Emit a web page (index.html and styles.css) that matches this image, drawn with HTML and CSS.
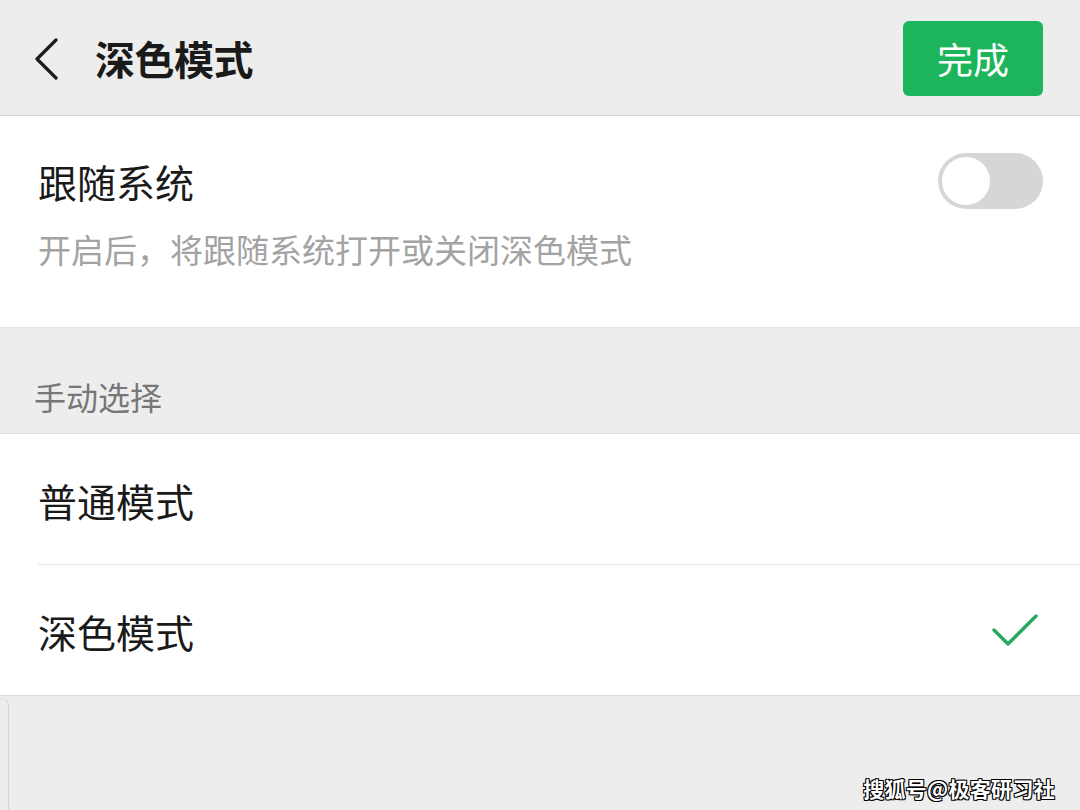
FILE: index.html
```html
<!DOCTYPE html>
<html lang="zh-CN">
<head>
<meta charset="utf-8">
<title>深色模式</title>
<link rel="stylesheet" href="styles.css">
</head>
<body>
<div class="page">
  <header class="topbar">
    <div class="topbar-left">
      <svg class="back" width="26" height="42" viewBox="0 0 26 42">
        <polyline points="23,2 4,21 23,40" fill="none" stroke="#1c1c1c" stroke-width="3.2" stroke-linecap="round" stroke-linejoin="round"/>
      </svg>
      <h1 class="title">深色模式</h1>
    </div>
    <button class="done">完成</button>
  </header>

  <section class="group follow">
    <div class="follow-row">
      <div class="follow-label">跟随系统</div>
      <div class="switch"><div class="knob"></div></div>
    </div>
    <div class="follow-desc">开启后，将跟随系统打开或关闭深色模式</div>
  </section>

  <div class="section-head">手动选择</div>

  <section class="group list">
    <div class="item">
      <span class="item-label">普通模式</span>
    </div>
    <div class="item">
      <span class="item-label">深色模式</span>
      <svg class="check" width="48" height="36" viewBox="0 0 48 36">
        <polyline points="3,17 17,31 45,3" fill="none" stroke="#25a862" stroke-width="3.4" stroke-linecap="round" stroke-linejoin="round"/>
      </svg>
    </div>
  </section>

  <div class="rest">
    <div class="edge"></div>
  </div>

  <div class="watermark">搜狐号@极客研习社</div>
</div>
</body>
</html>
```

FILE: styles.css
```css
html, body {
  margin: 0;
  padding: 0;
}
body {
  background: #ededed;
  font-family: "Noto Sans CJK SC", "Noto Sans", sans-serif;
  color: #1a1a1a;
}
.page {
  position: relative;
  width: 1080px;
  height: 810px;
  overflow: hidden;
  display: flex;
  flex-direction: column;
  background: #ededed;
}
.topbar {
  height: 115px;
  flex: none;
  display: flex;
  align-items: center;
  justify-content: space-between;
  padding: 0 37px 0 33px;
  border-bottom: 1px solid #d4d4d4;
  box-sizing: content-box;
}
.topbar-left {
  display: flex;
  align-items: center;
}
.back {
  display: block;
  margin-top: 2px;
}
.title {
  margin: 0 0 0 36px;
  font-size: 40px;
  font-weight: 700;
  line-height: 48px;
  letter-spacing: -0.5px;
  color: #1a1a1a;
}
.done {
  width: 140px;
  height: 75px;
  margin-top: 2px;
  border: none;
  border-radius: 6px;
  background: #1cb55b;
  color: #ffffff;
  font-family: "Noto Sans CJK SC", "Noto Sans", sans-serif;
  font-size: 36px;
  font-weight: 400;
  line-height: 75px;
  padding: 0;
}
.group {
  background: #ffffff;
  flex: none;
}
.follow {
  height: 212px;
  padding: 0 37px 0 38px;
  border-bottom: 1px solid #e4e4e4;
  box-sizing: border-box;
}
.follow-row {
  display: flex;
  align-items: center;
  justify-content: space-between;
  padding-top: 37px;
  height: 56px;
  box-sizing: content-box;
}
.follow-label {
  font-size: 39px;
  line-height: 56px;
  color: #1a1a1a;
}
.switch {
  width: 105px;
  height: 56px;
  border-radius: 28px;
  background: #d6d6d6;
  position: relative;
}
.knob {
  position: absolute;
  left: 4px;
  top: 4px;
  width: 48px;
  height: 48px;
  border-radius: 50%;
  background: #ffffff;
}
.follow-desc {
  margin-top: 19px;
  font-size: 33px;
  line-height: 42px;
  color: #a3a3a3;
  letter-spacing: 0;
}
.section-head {
  flex: none;
  height: 106px;
  box-sizing: border-box;
  padding: 46px 0 0 34px;
  font-size: 32px;
  line-height: 44px;
  color: #777777;
  border-bottom: 1px solid #e2e2e2;
}
.list {
  border-bottom: 1px solid #dedede;
}
.item {
  height: 130px;
  margin-left: 38px;
  padding-right: 41px;
  display: flex;
  align-items: center;
  justify-content: space-between;
  box-sizing: border-box;
}
.item + .item {
  border-top: 1px solid #e6e6e6;
  height: 131px;
}
.item-label {
  font-size: 39px;
  line-height: 56px;
  color: #1a1a1a;
  margin-top: 2px;
}
.check {
  display: block;
  margin-top: 2px;
}
.rest {
  flex: 1;
  position: relative;
}
.edge {
  width: 8px;
  height: 200px;
  margin-top: 2px;
  border-right: 1px solid #d6d6d6;
  border-top: 1px solid #e0e0e0;
  border-top-right-radius: 8px;
}
.watermark {
  position: absolute;
  right: 25px;
  bottom: 8px;
  font-size: 21px;
  font-weight: 700;
  line-height: 28px;
  color: #ffffff;
  letter-spacing: 0.3px;
  -webkit-text-stroke: 1px #000;
  paint-order: stroke fill;
  text-shadow: 1px 1px 0 #000, -1px -1px 0 #000, 1px -1px 0 #000, -1px 1px 0 #000;
}
```
